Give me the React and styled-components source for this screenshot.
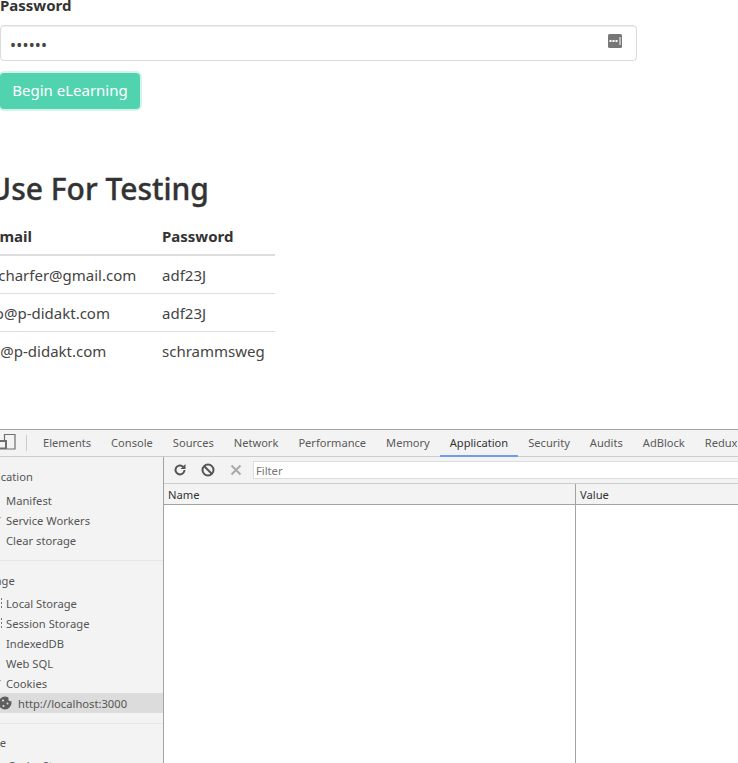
import React from "react";
import styled, { createGlobalStyle } from "styled-components";

const webFont = `"Noto Sans", "Open Sans", sans-serif`;
const toolFont = `"Noto Sans", "Open Sans", sans-serif`;

const users = [
  { email: "scharfer@gmail.com", password: "adf23J" },
  { email: "jo@p-didakt.com", password: "adf23J" },
  { email: "ti@p-didakt.com", password: "schrammsweg" },
];

const tabs = ["Elements", "Console", "Sources", "Network", "Performance", "Memory", "Application", "Security", "Audits", "AdBlock", "Redux"];

const GlobalStyle = createGlobalStyle`
  html, body { margin: 0; padding: 0; background: #fff; }
  body { overflow: hidden; }
`;

const Page = styled.div`
  width: 738px;
  height: 763px;
  overflow: hidden;
  display: flex;
  flex-direction: column;
  font-family: ${webFont};
  color: #333;
`;

const Content = styled.div`
  height: 429px;
  flex: none;
  overflow: hidden;
`;

const Label = styled.div`
  font-size: 15px;
  font-weight: 700;
  line-height: 20px;
  margin-top: -5px;
`;

const PasswordBox = styled.div`
  width: 637px;
  height: 36px;
  margin-top: 10px;
  box-sizing: border-box;
  border: 1px solid #dcdcdc;
  border-radius: 4px;
  box-shadow: inset 0 1px 1px rgba(0, 0, 0, 0.075);
  display: flex;
  align-items: center;
  justify-content: space-between;
  padding: 0 14px 0 9px;
`;

const Dots = styled.span`
  font-size: 16px;
  letter-spacing: 0.2px;
  line-height: 36px;
  margin-top: 3px;
  color: #444;
`;

const KeyIcon = styled.svg`
  width: 14px;
  height: 14px;
  margin-top: -5px;
`;

const SubmitButton = styled.button`
  display: block;
  margin-top: 12px;
  height: 36px;
  width: 140px;
  border: none;
  border-radius: 4px;
  background: #52d3b0;
  box-shadow: 0 0 0 2px #d3f4eb;
  color: #fff;
  font-family: ${webFont};
  font-size: 15px;
  line-height: 34px;
  padding: 0 0 2px;
`;

const Heading = styled.h2`
  margin: 60px 0 0 -11px;
  font-size: 30px;
  font-weight: 500;
  line-height: 40px;
  color: #333;
  -webkit-text-stroke: 0.35px #333;
`;

const UserTable = styled.table`
  margin: 9px 0 0 -21px;
  width: 296px;
  table-layout: fixed;
  border-collapse: collapse;
  font-size: 15px;
  color: #444;
`;

const HeadCell = styled.th`
  height: 37px;
  padding: 0 12px;
  width: ${(p) => p.$width || "auto"};
  text-align: left;
  font-weight: 700;
  font-size: 15px;
  color: #333;
  border-bottom: 2px solid #ddd;
  box-sizing: border-box;
`;

const Cell = styled.td`
  height: 38px;
  padding: 2px 12px 0;
  border-bottom: 1px solid #ddd;
  box-sizing: border-box;
  white-space: nowrap;
  ${(p) => p.$last && "border-bottom: none;"}
`;

const DevTools = styled.div`
  flex: 1;
  min-height: 0;
  display: flex;
  flex-direction: column;
  border-top: 1px solid #a3a3a3;
  background: #f3f3f3;
  font-family: ${toolFont};
  font-size: 11.2px;
  color: #333;
`;

const TabBar = styled.div`
  height: 26px;
  flex: none;
  display: flex;
  align-items: stretch;
  border-bottom: 1px solid #ccc;
  white-space: nowrap;
`;

const DockIcon = styled.svg`
  width: 16px;
  height: 16px;
  margin: 4px 0 0 0;
  flex: none;
  overflow: visible;
`;

const ToolbarDivider = styled.div`
  width: 1px;
  height: 16px;
  margin: 5px 6px 0 10px;
  background: #ccc;
  flex: none;
`;

const Tab = styled.div`
  padding: 0 10px;
  display: flex;
  align-items: center;
  flex: none;
  box-sizing: border-box;
  font-size: 11.1px;
  color: ${(p) => (p.$active ? "#333" : "#5a5a5a")};
  border-bottom: 2px solid ${(p) => (p.$active ? "#6e9cf0" : "transparent")};
  margin-bottom: -1px;
`;

const Body = styled.div`
  flex: 1;
  min-height: 0;
  display: flex;
`;

const Sidebar = styled.div`
  width: 164px;
  flex: none;
  box-sizing: border-box;
  border-right: 1px solid #a3a3a3;
  overflow: hidden;
`;

const Section = styled.div`
  padding: 10px 0;
  border-bottom: 1px solid #e6e6e6;
  &:last-child {
    padding-top: 9px;
  }
`;

const SectionTitle = styled.div`
  height: 20px;
  line-height: 20px;
  margin-left: -26px;
  color: #555;
  margin-bottom: ${(p) => p.$gap || 2}px;
`;

const TreeItem = styled.div`
  height: 20px;
  display: flex;
  align-items: center;
  padding-left: ${(p) => p.$indent || 6}px;
  position: relative;
  white-space: nowrap;
  color: #555;
  background: ${(p) => (p.$selected ? "#dcdcdc" : "transparent")};
`;

const RowIcon = styled.svg`
  position: absolute;
  left: ${(p) => p.$left || 0}px;
  top: 50%;
  transform: translateY(-50%);
`;

const Main = styled.div`
  flex: 1;
  min-width: 0;
  display: flex;
  flex-direction: column;
  background: #fff;
`;

const FilterBar = styled.div`
  height: 27px;
  flex: none;
  display: flex;
  align-items: center;
  background: #f3f3f3;
  border-bottom: 1px solid #ccc;
  box-sizing: border-box;
`;

const ToolIcon = styled.svg`
  width: 16px;
  height: 16px;
  flex: none;
  margin-left: ${(p) => p.$gap}px;
`;

const FilterInput = styled.div`
  flex: 1;
  height: 18px;
  margin-left: 9px;
  background: #fff;
  border: 1px solid #ddd;
  border-right: none;
  box-sizing: border-box;
  padding-left: 2px;
  line-height: 18px;
  color: #757575;
`;

const GridHead = styled.div`
  height: 21px;
  flex: none;
  display: flex;
  background: #f3f3f3;
  border-bottom: 1px solid #a3a3a3;
  box-sizing: border-box;
`;

const GridCol = styled.div`
  width: ${(p) => p.$width};
  flex: ${(p) => (p.$width ? "none" : 1)};
  padding-left: 4px;
  line-height: 21px;
  box-sizing: border-box;
  border-right: ${(p) => (p.$width ? "1px solid #a3a3a3" : "none")};
`;

const GridBody = styled.div`
  flex: 1;
  display: flex;
`;

const GridFill = styled.div`
  width: 412px;
  border-right: 1px solid #a3a3a3;
  box-sizing: border-box;
`;

// only the right edge of these tree icons shows, the rest is off the page
const GridMark = () => (
  <RowIcon width="10" height="12" viewBox="0 0 10 12" $left={-8}>
    <path d="M0 2h10M0 6h10M0 10h10" stroke="#777" strokeWidth="2" strokeDasharray="2 1" />
  </RowIcon>
);

const ArrowMark = () => (
  <RowIcon width="10" height="8" viewBox="0 0 10 8" $left={-9}>
    <path d="M2 1h8l-4 6z" fill="#888" />
  </RowIcon>
);

export default function App() {
  return (
    <Page>
      <GlobalStyle />
      <Content>
        <Label>Password</Label>
        <PasswordBox>
          <Dots>••••••</Dots>
          <KeyIcon viewBox="0 0 14 14">
            <rect width="14" height="14" rx="1.5" fill="#777" />
            <rect x="1.5" y="6" width="2" height="2" fill="#fff" />
            <rect x="4.5" y="6" width="2" height="2" fill="#fff" />
            <rect x="7.5" y="6" width="2" height="2" fill="#fff" />
            <rect x="11.5" y="3" width="1" height="8" fill="#fff" />
          </KeyIcon>
        </PasswordBox>
        <SubmitButton>Begin eLearning</SubmitButton>
        <Heading>Use For Testing</Heading>
        <UserTable>
          <thead>
            <tr>
              <HeadCell $width="171px">Email</HeadCell>
              <HeadCell>Password</HeadCell>
            </tr>
          </thead>
          <tbody>
            {users.map((u, i) => (
              <tr key={u.email}>
                <Cell $last={i === users.length - 1}>{u.email}</Cell>
                <Cell $last={i === users.length - 1}>{u.password}</Cell>
              </tr>
            ))}
          </tbody>
        </UserTable>
      </Content>
      <DevTools>
        <TabBar>
          <DockIcon viewBox="0 0 16 16">
            <path d="M4.5 6V0.5H15V15H7" fill="none" stroke="#6e6e6e" strokeWidth="1.2" />
            <rect x="-2" y="7" width="8" height="7.5" fill="none" stroke="#6e6e6e" strokeWidth="2" />
          </DockIcon>
          <ToolbarDivider />
          {tabs.map((t) => (
            <Tab key={t} $active={t === "Application"}>{t}</Tab>
          ))}
        </TabBar>
        <Body>
          <Sidebar>
            <Section>
              <SectionTitle $gap={3}>Application</SectionTitle>
              <TreeItem>Manifest</TreeItem>
              <TreeItem><ArrowMark />Service Workers</TreeItem>
              <TreeItem>Clear storage</TreeItem>
            </Section>
            <Section>
              <SectionTitle>Storage</SectionTitle>
              <TreeItem><GridMark />Local Storage</TreeItem>
              <TreeItem><GridMark />Session Storage</TreeItem>
              <TreeItem>IndexedDB</TreeItem>
              <TreeItem>Web SQL</TreeItem>
              <TreeItem><ArrowMark />Cookies</TreeItem>
              <TreeItem $selected $indent={18}>
                <RowIcon width="14" height="14" viewBox="0 0 14 14" $left={-2}>
                  <circle cx="7" cy="7" r="6.5" fill="#5f5f5f" />
                  <circle cx="12.5" cy="3" r="2.2" fill="#dcdcdc" />
                  <circle cx="5" cy="4.5" r="1.1" fill="#dcdcdc" />
                  <circle cx="9.5" cy="7.5" r="1" fill="#dcdcdc" />
                  <circle cx="5.5" cy="10" r="1.1" fill="#dcdcdc" />
                </RowIcon>
                http://localhost:3000
              </TreeItem>
            </Section>
            <Section>
              <SectionTitle>Cache</SectionTitle>
              <TreeItem $indent={8}>Cache Storage</TreeItem>
            </Section>
          </Sidebar>
          <Main>
            <FilterBar>
              <ToolIcon viewBox="0 0 16 16" $gap={8}>
                <path d="M12.5 8a4.5 4.5 0 1 1-1.4-3.3" fill="none" stroke="#555" strokeWidth="2" />
                <path d="M13.5 2v5h-5z" fill="#555" />
              </ToolIcon>
              <ToolIcon viewBox="0 0 16 16" $gap={12}>
                <circle cx="8" cy="8" r="5.5" fill="none" stroke="#555" strokeWidth="2" />
                <path d="M4 4l8 8" stroke="#555" strokeWidth="2" />
              </ToolIcon>
              <ToolIcon viewBox="0 0 16 16" $gap={12}>
                <path d="M3.5 3.5l9 9M12.5 3.5l-9 9" stroke="#aaa" strokeWidth="2" />
              </ToolIcon>
              <FilterInput>Filter</FilterInput>
            </FilterBar>
            <GridHead>
              <GridCol $width="412px">Name</GridCol>
              <GridCol>Value</GridCol>
            </GridHead>
            <GridBody>
              <GridFill />
            </GridBody>
          </Main>
        </Body>
      </DevTools>
    </Page>
  );
}
